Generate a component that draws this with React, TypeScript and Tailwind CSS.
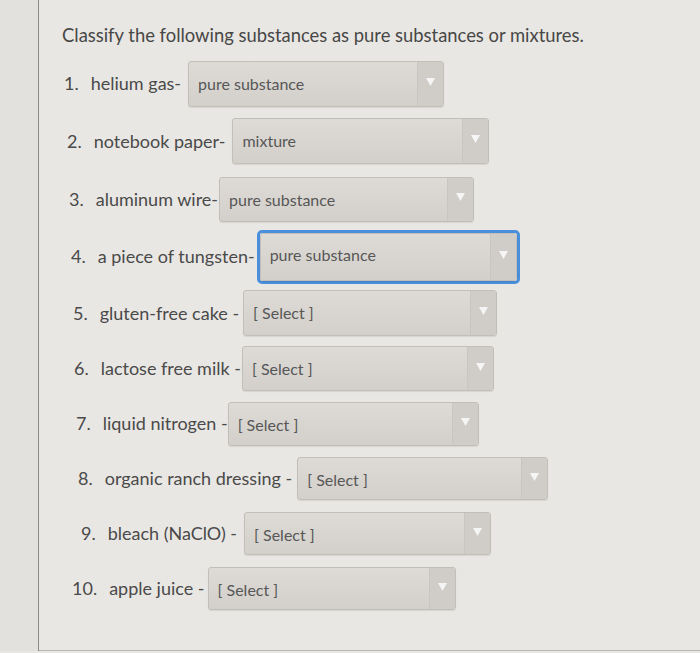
import React from 'react';

interface Row {
  n: string;
  label: string;
  value: string;
  ml: string;
  h: string;
  gap: string;
  boxW: string;
  boxH: string;
  focused?: boolean;
}

const rows: Row[] = [
  { n: '1.', label: 'helium gas-', value: 'pure substance', ml: 'ml-[25px]', h: 'h-[57px]', gap: 'ml-[7px]', boxW: 'w-[256px]', boxH: 'h-[46px]' },
  { n: '2.', label: 'notebook paper-', value: 'mixture', ml: 'ml-[28px]', h: 'h-[58px]', gap: 'ml-[7px]', boxW: 'w-[257px]', boxH: 'h-[46px]' },
  { n: '3.', label: 'aluminum wire-', value: 'pure substance', ml: 'ml-[30px]', h: 'h-[58px]', gap: 'ml-[1px]', boxW: 'w-[255px]', boxH: 'h-[45px]' },
  { n: '4.', label: 'a piece of tungsten-', value: 'pure substance', ml: 'ml-[32px]', h: 'h-[57px]', gap: 'ml-[2px]', boxW: 'w-[263px]', boxH: 'h-[54px]', focused: true },
  { n: '5.', label: 'gluten-free cake -', value: '[ Select ]', ml: 'ml-[34px]', h: 'h-[56px]', gap: 'ml-[4px]', boxW: 'w-[254px]', boxH: 'h-[46px]' },
  { n: '6.', label: 'lactose free milk -', value: '[ Select ]', ml: 'ml-[35px]', h: 'h-[55px]', gap: 'ml-[1px]', boxW: 'w-[252px]', boxH: 'h-[45px]' },
  { n: '7.', label: 'liquid nitrogen -', value: '[ Select ]', ml: 'ml-[37px]', h: 'h-[55px]', gap: 'ml-[0px]', boxW: 'w-[251px]', boxH: 'h-[44px]' },
  { n: '8.', label: 'organic ranch dressing -', value: '[ Select ]', ml: 'ml-[39px]', h: 'h-[55px]', gap: 'ml-[5px]', boxW: 'w-[251px]', boxH: 'h-[43px]' },
  { n: '9.', label: 'bleach (NaClO) -', value: '[ Select ]', ml: 'ml-[42px]', h: 'h-[55px]', gap: 'ml-[7px]', boxW: 'w-[247px]', boxH: 'h-[43px]' },
  { n: '10.', label: 'apple juice -', value: '[ Select ]', ml: 'ml-[33px]', h: 'h-[55px]', gap: 'ml-[3px]', boxW: 'w-[248px]', boxH: 'h-[43px]' },
];

const SelectBox: React.FC<{ row: Row }> = ({ row }) => {
  const box = (
    <div
      className={`flex ${row.focused ? 'h-full w-full' : `${row.boxW} ${row.boxH}`} rounded-[3px] border border-[#c2beb8] bg-gradient-to-b from-[#dedbd6] to-[#d3d0cb] shadow-[0_1px_1px_rgba(0,0,0,0.08)]`}
    >
      <div
        className={`flex flex-1 items-start pl-[9px] ${row.focused ? 'pt-[11px]' : 'pt-[12px]'} text-[16px] leading-[20px] text-[#575757]`}
      >
        {row.value}
      </div>
      <div className="flex w-[26px] items-center justify-center border-l border-[#c9c6c1] bg-[#d0cdc8]">
        <svg width="9" height="8" viewBox="0 0 9 8" className="-mt-[4px]">
          <path d="M0 0 L9 0 L4.5 8 Z" fill="#f5f5f5" />
        </svg>
      </div>
    </div>
  );
  if (row.focused) {
    return (
      <div className={`${row.boxW} ${row.boxH} rounded-[5px] border-[3px] border-[#4a8fdc]`}>{box}</div>
    );
  }
  return box;
};

export default function App() {
  return (
    <div
      className="flex h-[653px] w-[700px] overflow-hidden bg-[#e9e7e3]"
      style={{ fontFamily: 'Lato, "Open Sans", sans-serif' }}
    >
      <div className="h-[651px] w-[39px] shrink-0 border-r border-[#8e8b86] bg-[#e3e1dd]" />
      <div className="flex h-[651px] flex-1 flex-col border-b border-[#b9b6b1]">
        <h1 className="ml-[23px] mt-[22px] text-[18.4px] leading-[26px] text-[#474747]">
          Classify the following substances as pure substances or mixtures.
        </h1>
        <div className="mt-[7px] flex flex-col">
          {rows.map((row) => (
            <div key={row.n} className={`flex items-center ${row.h} ${row.ml} text-[18px] text-[#4a4a4a]`}>
              <span>{row.n}</span>
              <span className="ml-[12px]">{row.label}</span>
              <span className={row.gap}>
                <SelectBox row={row} />
              </span>
            </div>
          ))}
        </div>
      </div>
    </div>
  );
}
